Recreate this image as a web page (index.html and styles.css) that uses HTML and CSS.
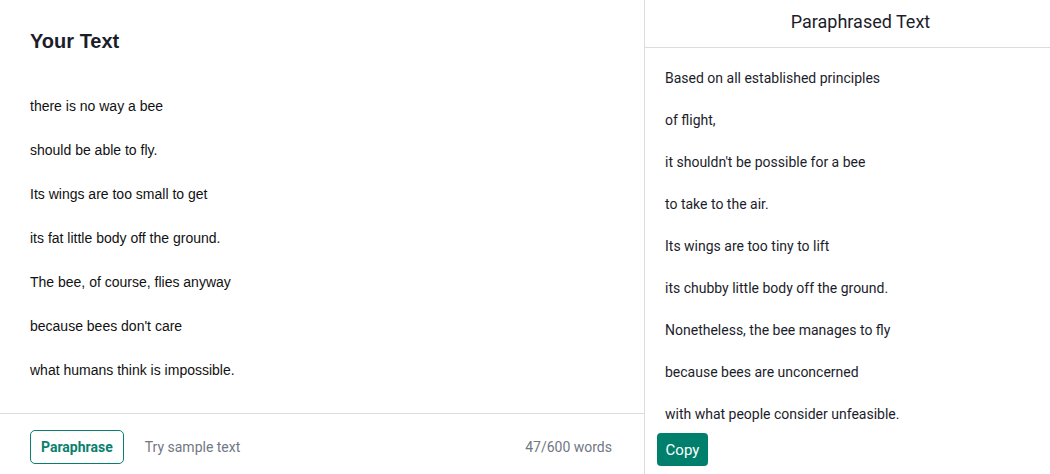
FILE: index.html
```html
<!DOCTYPE html>
<html lang="en">
<head>
<meta charset="utf-8">
<title>Paraphraser</title>
<link rel="stylesheet" href="styles.css">
</head>
<body>
<div class="app">
  <section class="input-panel">
    <div class="input-body">
      <h1 class="input-title">Your Text</h1>
      <div class="input-text">
        <p>there is no way a bee</p>
        <p>should be able to fly.</p>
        <p>Its wings are too small to get</p>
        <p>its fat little body off the ground.</p>
        <p>The bee, of course, flies anyway</p>
        <p>because bees don't care</p>
        <p>what humans think is impossible.</p>
      </div>
    </div>
    <footer class="input-footer">
      <button class="btn-outline">Paraphrase</button>
      <button class="btn-link">Try sample text</button>
      <span class="word-count">47/600 words</span>
    </footer>
  </section>
  <section class="output-panel">
    <header class="output-header">Paraphrased Text</header>
    <div class="output-text">
      <p>Based on all established principles</p>
      <p>of flight,</p>
      <p>it shouldn't be possible for a bee</p>
      <p>to take to the air.</p>
      <p>Its wings are too tiny to lift</p>
      <p>its chubby little body off the ground.</p>
      <p>Nonetheless, the bee manages to fly</p>
      <p>because bees are unconcerned</p>
      <p>with what people consider unfeasible.</p>
    </div>
    <div class="output-actions">
      <button class="btn-solid">Copy</button>
    </div>
  </section>
</div>
</body>
</html>
```
FILE: styles.css
```css
* { box-sizing: border-box; }
html, body { margin: 0; padding: 0; background: #fff; }
body { width: 1050px; height: 474px; overflow: hidden; }

.app {
  display: flex;
  height: 474px;
}

.input-panel {
  width: 645px;
  flex-shrink: 0;
  border-right: 1px solid #dcdcdc;
  display: flex;
  flex-direction: column;
}

.input-body {
  flex: 1;
  padding: 28px 30px 0;
}

.input-title {
  margin: 0;
  font-family: "Liberation Sans", Arial, sans-serif;
  font-weight: 700;
  font-size: 20px;
  line-height: 26px;
  color: #1c1d2b;
}

.input-text {
  margin-top: 44px;
  font-family: "Liberation Sans", Arial, sans-serif;
  font-size: 14px;
  color: #111;
}

.input-text p {
  margin: 0;
  height: 44px;
  line-height: 16px;
}

.input-footer {
  flex-shrink: 0;
  height: 61px;
  border-top: 1px solid #dcdcdc;
  display: flex;
  align-items: center;
  padding: 5px 32px 0 30px;
  font-family: Roboto, sans-serif;
}

.btn-outline {
  height: 34px;
  padding: 0 10px;
  border: 1px solid #0a7f6f;
  border-radius: 5px;
  background: #fff;
  color: #0a7f6f;
  font-family: Roboto, sans-serif;
  font-weight: 700;
  font-size: 14px;
}

.btn-link {
  margin-left: 13px;
  border: none;
  background: none;
  padding: 0 8px;
  color: #717784;
  font-family: Roboto, sans-serif;
  font-size: 14px;
}

.word-count {
  margin-left: auto;
  color: #717784;
  font-size: 14px;
}

.output-panel {
  flex: 1;
  display: flex;
  flex-direction: column;
  font-family: Roboto, sans-serif;
  color: #1c1d2b;
}

.output-header {
  flex-shrink: 0;
  height: 48px;
  border-bottom: 1px solid #dcdcdc;
  text-align: center;
  padding-left: 26px;
  font-size: 18px;
  line-height: 44px;
}

.output-text {
  flex-shrink: 0;
  padding: 21px 20px 0;
  font-size: 14px;
}

.output-text p {
  margin: 0;
  height: 42px;
  line-height: 18px;
}

.output-actions {
  flex-shrink: 0;
  padding: 0 12px;
  margin-top: -14px;
}

.btn-solid {
  height: 33px;
  width: 51px;
  border: none;
  border-radius: 4px;
  background: #007f6d;
  color: #fff;
  font-family: Roboto, sans-serif;
  font-size: 15px;
  padding: 0;
}
```
